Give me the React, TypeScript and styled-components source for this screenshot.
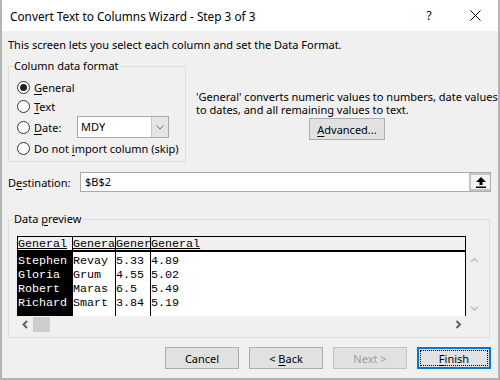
import React from "react";
import styled, { createGlobalStyle } from "styled-components";

const Global = createGlobalStyle`
  html, body { margin: 0; padding: 0; background: #f0f0f0; }
  body {
    font-family: "Noto Sans", "Segoe UI", sans-serif;
    font-size: 11px;
    color: #000;
  }
`;

const Window = styled.div`
  width: 500px;
  height: 380px;
  box-sizing: border-box;
  border: 2px solid #b4b4b4;
  border-top: none;
  background: #f0f0f0;
  display: flex;
  flex-direction: column;
  overflow: hidden;
`;

const TitleBar = styled.div`
  height: 31px;
  flex: none;
  background: #fff;
  display: flex;
  align-items: center;
  padding-left: 8px;
`;

const Title = styled.div`
  flex: 1;
  font-size: 11.8px;
  line-height: 16px;
`;

const TitleButton = styled.div`
  width: 46px;
  height: 31px;
  display: flex;
  align-items: center;
  justify-content: center;
  font-size: 12px;
`;

const Body = styled.div`
  flex: 1;
  padding: 6px 7px 0 6px;
  display: flex;
  flex-direction: column;
`;

const Line = styled.div`
  line-height: 16px;
  white-space: nowrap;
`;

const Key = styled.span`
  text-decoration: underline;
  text-underline-offset: 2px;
`;

const TopRow = styled.div`
  display: flex;
  margin-top: 5px;
`;

const Group = styled.fieldset<{ $w?: number }>`
  margin: 0;
  padding: 0;
  min-width: 0;
  border: 1px solid #dcdcdc;
  box-sizing: border-box;
  width: ${(p) => (p.$w ? `${p.$w}px` : "auto")};
  flex: none;
`;

const Legend = styled.legend`
  margin-left: 4px;
  padding: 0 1px;
  line-height: 16px;
  white-space: nowrap;
`;

const RadioList = styled.div`
  display: flex;
  flex-direction: column;
  gap: 1px;
  padding: 4px 0 4px 8px;
`;

const RadioRow = styled.div<{ $h?: number }>`
  display: flex;
  align-items: center;
  gap: 4px;
  height: ${(p) => p.$h ?? 18}px;
  white-space: nowrap;
`;

const RadioCircle = styled.span`
  width: 13px;
  height: 13px;
  box-sizing: border-box;
  border: 1px solid #333;
  border-radius: 50%;
  background: #fff;
  display: flex;
  align-items: center;
  justify-content: center;
  flex: none;
`;

const RadioDot = styled.span`
  width: 7px;
  height: 7px;
  border-radius: 50%;
  background: #222;
`;

const DateLabel = styled.span`
  width: 39px;
  flex: none;
`;

const Combo = styled.div`
  width: 92px;
  height: 22px;
  box-sizing: border-box;
  border: 1px solid #a8a8a8;
  background: #fff;
  display: flex;
`;

const ComboText = styled.div`
  flex: 1;
  padding-left: 3px;
  line-height: 20px;
`;

const ComboButton = styled.div`
  width: 16px;
  background: #e5e5e5;
  border-left: 1px solid #c9c9c9;
  display: flex;
  align-items: center;
  justify-content: center;
`;

const Description = styled.div`
  flex: 1;
  margin-left: 10px;
  margin-right: -7px;
  padding-top: 32px;
  display: flex;
  flex-direction: column;
  align-items: center;
`;

const DescText = styled.div`
  align-self: stretch;
  line-height: 13px;
  white-space: nowrap;
`;

const Button = styled.button<{ $w?: number; $variant?: "primary" | "disabled" }>`
  width: ${(p) => p.$w ?? 74}px;
  height: 22px;
  box-sizing: border-box;
  padding: 0;
  margin: 0;
  font: inherit;
  font-size: 11px;
  color: ${(p) => (p.$variant === "disabled" ? "#a0a0a0" : "#000")};
  background: #e1e1e1;
  border: ${(p) =>
    p.$variant === "primary"
      ? "2px solid #0078d7"
      : p.$variant === "disabled"
      ? "1px solid #c2c2c2"
      : "1px solid #adadad"};
  display: inline-flex;
  align-items: center;
  justify-content: center;
  flex: none;
`;

const FocusBox = styled.span`
  align-self: stretch;
  flex: 1;
  margin: 1px;
  border: 1px dotted #000;
  display: flex;
  align-items: center;
  justify-content: center;
`;

const DestRow = styled.div`
  display: flex;
  align-items: center;
  margin-top: 10px;
  height: 20px;
`;

const DestLabel = styled.span`
  width: 72px;
  flex: none;
`;

const DestField = styled.div`
  flex: 1;
  height: 20px;
  box-sizing: border-box;
  border: 1px solid #ababab;
  background: #fff;
  display: flex;
`;

const DestText = styled.div`
  flex: 1;
  padding-left: 4px;
  line-height: 18px;
`;

const RefButton = styled.div`
  width: 21px;
  box-sizing: border-box;
  border: 2px solid #c4c4c4;
  border-right: none;
  background: #f3f3f3;
  display: flex;
  align-items: center;
  justify-content: center;
`;

const PreviewGroup = styled(Group)`
  margin-top: 19px;
  margin-right: 1px;
`;

const PreviewInner = styled.div`
  padding: 9px 0 5px 8px;
`;

const PreviewArea = styled.div`
  display: grid;
  grid-template-columns: 449px 16px;
  grid-template-rows: 80px 16px;
`;

const Grid = styled.div`
  display: flex;
  border-top: 1px solid #000;
  border-left: 1px solid #000;
  font-family: "Liberation Mono", "Courier New", monospace;
  font-size: 11.7px;
  overflow: hidden;
`;

const Column = styled.div<{ $w?: number; $selected?: boolean }>`
  width: ${(p) => (p.$w ? `${p.$w}px` : "auto")};
  flex: ${(p) => (p.$w ? "none" : "1")};
  box-sizing: border-box;
  border-right: 1px solid #000;
  display: flex;
  flex-direction: column;
  background: ${(p) => (p.$selected ? "#000" : "#fff")};
  color: ${(p) => (p.$selected ? "#fff" : "#000")};
  overflow: hidden;
`;

const HeaderCell = styled.div`
  height: 13px;
  line-height: 15px;
  background: #f0f0f0;
  color: #000;
  border-bottom: 2px solid #000;
  text-decoration: underline;
  white-space: nowrap;
  overflow: hidden;
  flex: none;
`;

const Cells = styled.div`
  padding-top: 2px;
`;

const Cell = styled.div`
  height: 14px;
  line-height: 14px;
  white-space: nowrap;
  overflow: hidden;
`;

const VScroll = styled.div`
  margin-top: 16px;
  display: flex;
  flex-direction: column;
  justify-content: space-between;
`;

const HScroll = styled.div`
  display: flex;
  align-items: stretch;
`;

const ScrollArrow = styled.div`
  width: 16px;
  height: 16px;
  display: flex;
  align-items: center;
  justify-content: center;
  flex: none;
`;

const Thumb = styled.div`
  width: 17px;
  margin: 1px 0 0;
  background: #cdcdcd;
`;

const Spacer = styled.div`
  flex: 1;
`;

const ButtonRow = styled.div`
  display: flex;
  justify-content: flex-end;
  gap: 10px;
  margin-top: 9px;
`;

const Chevron = ({ dir, color }: { dir: "up" | "down" | "left" | "right"; color: string }) => {
  const pts: Record<string, string> = {
    up: "1,5 4.5,1.5 8,5",
    down: "1,1.5 4.5,5 8,1.5",
    left: "5,1 1.5,4.5 5,8",
    right: "1.5,1 5,4.5 1.5,8",
  };
  const vertical = dir === "up" || dir === "down";
  return (
    <svg width={vertical ? 9 : 7} height={vertical ? 7 : 9} viewBox={vertical ? "0 0 9 7" : "0 0 7 9"}>
      <polyline points={pts[dir]} fill="none" stroke={color} strokeWidth={vertical ? 1.6 : 2} />
    </svg>
  );
};

const columns = [
  { head: "General", w: 55, selected: true, rows: ["Stephen", "Gloria", "Robert", "Richard"] },
  { head: "General", w: 43, rows: ["Revay", "Grum", "Maras", "Smart"] },
  { head: "General", w: 35, rows: ["5.33", "4.55", "6.5", "3.84"] },
  { head: "General", rows: ["4.89", "5.02", "5.49", "5.19"] },
];

export default function App() {
  return (
    <>
      <Global />
      <Window>
        <TitleBar>
          <Title>Convert Text to Columns Wizard - Step 3 of 3</Title>
          <TitleButton>?</TitleButton>
          <TitleButton>
            <svg width="11" height="11" viewBox="0 0 11 11">
              <path d="M0.5 0.5 L10.5 10.5 M10.5 0.5 L0.5 10.5" stroke="#000" strokeWidth="1" />
            </svg>
          </TitleButton>
        </TitleBar>
        <Body>
          <Line>This screen lets you select each column and set the Data Format.</Line>
          <TopRow>
            <Group $w={178}>
              <Legend>Column data format</Legend>
              <RadioList>
                <RadioRow>
                  <RadioCircle>
                    <RadioDot />
                  </RadioCircle>
                  <span>
                    <Key>G</Key>eneral
                  </span>
                </RadioRow>
                <RadioRow>
                  <RadioCircle />
                  <span>
                    <Key>T</Key>ext
                  </span>
                </RadioRow>
                <RadioRow $h={22}>
                  <RadioCircle />
                  <DateLabel>
                    <Key>D</Key>ate:
                  </DateLabel>
                  <Combo>
                    <ComboText>MDY</ComboText>
                    <ComboButton>
                      <svg width="8" height="5" viewBox="0 0 8 5">
                        <polyline points="0.5,0.5 4,4 7.5,0.5" fill="none" stroke="#707070" strokeWidth="1" />
                      </svg>
                    </ComboButton>
                  </Combo>
                </RadioRow>
                <RadioRow>
                  <RadioCircle />
                  <span>
                    Do not <Key>i</Key>mport column (skip)
                  </span>
                </RadioRow>
              </RadioList>
            </Group>
            <Description>
              <DescText>'General' converts numeric values to numbers, date values</DescText>
              <DescText>to dates, and all remaining values to text.</DescText>
              <Button $w={76} style={{ marginTop: 2 }}>
                <span>
                  <Key>A</Key>dvanced...
                </span>
              </Button>
            </Description>
          </TopRow>
          <DestRow>
            <DestLabel>
              D<Key>e</Key>stination:
            </DestLabel>
            <DestField>
              <DestText>$B$2</DestText>
              <RefButton>
                <svg width="10" height="11" viewBox="0 0 10 11">
                  <polygon points="5,0 10,5 6.5,5 6.5,8 3.5,8 3.5,5 0,5" fill="#000" />
                  <rect x="0" y="9.5" width="10" height="1.5" fill="#000" />
                </svg>
              </RefButton>
            </DestField>
          </DestRow>
          <PreviewGroup>
            <Legend>
              Data <Key>p</Key>review
            </Legend>
            <PreviewInner>
              <PreviewArea>
                <Grid>
                  {columns.map((c, i) => (
                    <Column key={i} $w={c.w} $selected={c.selected}>
                      <HeaderCell>{c.head}</HeaderCell>
                      <Cells>
                        {c.rows.map((r) => (
                          <Cell key={r}>{r}</Cell>
                        ))}
                      </Cells>
                    </Column>
                  ))}
                </Grid>
                <VScroll>
                  <ScrollArrow>
                    <Chevron dir="up" color="#c2c2c2" />
                  </ScrollArrow>
                  <ScrollArrow>
                    <Chevron dir="down" color="#c2c2c2" />
                  </ScrollArrow>
                </VScroll>
                <HScroll>
                  <ScrollArrow>
                    <Chevron dir="left" color="#606060" />
                  </ScrollArrow>
                  <Thumb />
                  <Spacer />
                  <ScrollArrow>
                    <Chevron dir="right" color="#606060" />
                  </ScrollArrow>
                </HScroll>
              </PreviewArea>
            </PreviewInner>
          </PreviewGroup>
          <ButtonRow>
            <Button>Cancel</Button>
            <Button>
              <span>
                &lt; <Key>B</Key>ack
              </span>
            </Button>
            <Button $variant="disabled">Next &gt;</Button>
            <Button $variant="primary">
              <FocusBox>
                <span>
                  <Key>F</Key>inish
                </span>
              </FocusBox>
            </Button>
          </ButtonRow>
        </Body>
      </Window>
    </>
  );
}
